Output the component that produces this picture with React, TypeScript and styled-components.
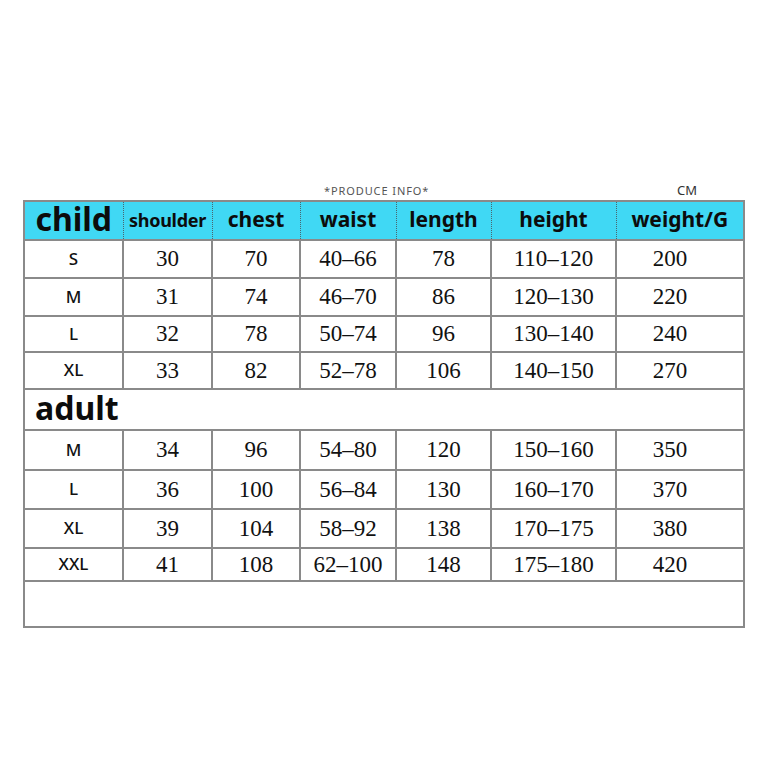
import React from 'react';
import styled, { createGlobalStyle } from 'styled-components';

const GlobalStyle = createGlobalStyle`
  html, body {
    margin: 0;
    padding: 0;
    background: #ffffff;
  }
`;

const Page = styled.div`
  width: 768px;
  height: 768px;
  background: #ffffff;
  padding-top: 181px;
  box-sizing: border-box;
`;

const Caption = styled.div`
  position: relative;
  height: 19px;
  width: 720px;
  margin-left: 23px;
  font-family: 'Noto Sans', 'Open Sans', sans-serif;
  color: #444;
`;

const ProduceInfo = styled.span`
  position: absolute;
  left: 301px;
  top: 2px;
  font-size: 11px;
  letter-spacing: 0.9px;
  color: #555;
`;

const Unit = styled.span`
  position: absolute;
  left: 654px;
  top: 0px;
  font-size: 13px;
  color: #333;
`;

const Table = styled.table`
  margin-left: 23px;
  border-collapse: collapse;
  table-layout: fixed;
  width: 720px;
  border: 2px solid #8a8a8a;
`;

const Row = styled.tr<{ $h: number }>`
  height: ${(p) => p.$h}px;
`;

const HeadCell = styled.th<{ $size?: number }>`
  background: #40d8f4;
  border-left: 1px dotted #4a6670;
  border-right: 1px dotted #4a6670;
  padding: 0 0 2px 0;
  font-family: 'Noto Sans', 'Open Sans', sans-serif;
  font-weight: 700;
  font-size: ${(p) => p.$size ?? 21}px;
  color: #0c0c0c;
  text-align: center;
  white-space: nowrap;
  letter-spacing: ${(p) => ((p.$size ?? 21) < 19 ? '-0.3px' : '0')};
  line-height: 1;
  vertical-align: middle;
`;

const GroupHead = styled(HeadCell)`
  font-size: 32px;
  padding-bottom: 4px;
`;

const SizeCell = styled.td`
  border: 2px solid #8a8a8a;
  padding: 0 0 2px 0;
  font-family: 'Noto Sans', 'Open Sans', sans-serif;
  font-size: 17px;
  font-weight: 500;
  color: #111;
  text-align: center;
  vertical-align: middle;
`;

const ValueCell = styled.td<{ $dx?: number }>`
  border: 2px solid #8a8a8a;
  padding: 0;
  padding-left: ${(p) => Math.max(0, p.$dx ?? 0)}px;
  padding-right: ${(p) => Math.max(0, -(p.$dx ?? 0))}px;
  font-family: 'Liberation Serif', 'DejaVu Serif', serif;
  font-size: 23px;
  color: #111;
  text-align: center;
  vertical-align: middle;
  white-space: nowrap;
`;

const GroupRowCell = styled.td`
  border: 2px solid #8a8a8a;
  padding: 0 0 4px 10px;
  font-family: 'Noto Sans', 'Open Sans', sans-serif;
  font-weight: 700;
  font-size: 32px;
  color: #0c0c0c;
  text-align: left;
  vertical-align: middle;
  line-height: 1;
`;

const BlankCell = styled.td`
  border: 2px solid #8a8a8a;
  padding: 0;
`;

const widths = [99, 89, 88, 96, 95, 125, 128];

type SizeRow = { size: string; h: number; values: string[] };

const childRows: SizeRow[] = [
  { size: 'S', h: 38, values: ['30', '70', '40–66', '78', '110–120', '200'] },
  { size: 'M', h: 38, values: ['31', '74', '46–70', '86', '120–130', '220'] },
  { size: 'L', h: 36, values: ['32', '78', '50–74', '96', '130–140', '240'] },
  { size: 'XL', h: 37, values: ['33', '82', '52–78', '106', '140–150', '270'] },
];

const adultRows: SizeRow[] = [
  { size: 'M', h: 40, values: ['34', '96', '54–80', '120', '150–160', '350'] },
  { size: 'L', h: 39, values: ['36', '100', '56–84', '130', '160–170', '370'] },
  { size: 'XL', h: 39, values: ['39', '104', '58–92', '138', '170–175', '380'] },
  { size: 'XXL', h: 33, values: ['41', '108', '62–100', '148', '175–180', '420'] },
];

const headers: { label: string; size?: number }[] = [
  { label: 'shoulder', size: 18 },
  { label: 'chest' },
  { label: 'waist' },
  { label: 'length' },
  { label: 'height' },
  { label: 'weight/G' },
];

const SizeRows = ({ rows }: { rows: SizeRow[] }) => (
  <>
    {rows.map((r, i) => (
      <Row key={r.size + i} $h={r.h}>
        <SizeCell>{r.size}</SizeCell>
        {r.values.map((v, j) => (
          <ValueCell key={j} $dx={j === 5 ? -20 : 0}>
            {v}
          </ValueCell>
        ))}
      </Row>
    ))}
  </>
);

export default function App() {
  return (
    <Page>
      <GlobalStyle />
      <Caption>
        <ProduceInfo>*PRODUCE INFO*</ProduceInfo>
        <Unit>CM</Unit>
      </Caption>
      <Table>
        <colgroup>
          {widths.map((w, i) => (
            <col key={i} style={{ width: w }} />
          ))}
        </colgroup>
        <tbody>
          <Row $h={39}>
            <GroupHead>child</GroupHead>
            {headers.map((h) => (
              <HeadCell key={h.label} $size={h.size}>
                {h.label}
              </HeadCell>
            ))}
          </Row>
          <SizeRows rows={childRows} />
          <Row $h={41}>
            <GroupRowCell colSpan={7}>adult</GroupRowCell>
          </Row>
          <SizeRows rows={adultRows} />
          <Row $h={46}>
            <BlankCell colSpan={7} />
          </Row>
        </tbody>
      </Table>
    </Page>
  );
}
